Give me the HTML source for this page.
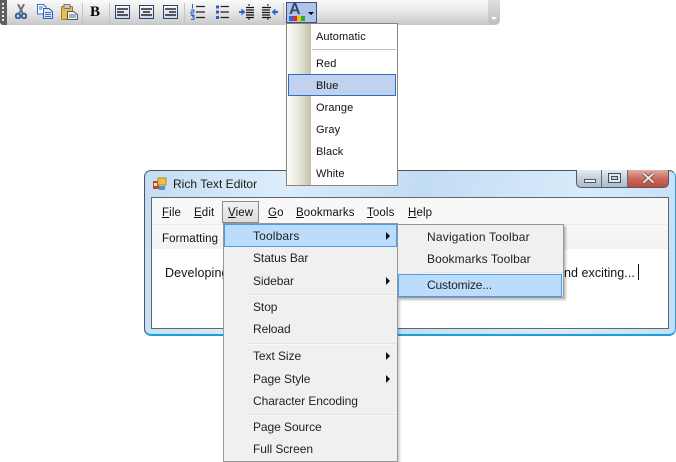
<!DOCTYPE html>
<html><head><meta charset="utf-8"><style>
html,body{margin:0;padding:0;background:#fff}
body{position:relative;width:676px;height:462px;overflow:hidden;font:11.5px/14px "Liberation Sans",sans-serif;color:#111}
div,svg{position:absolute;box-sizing:border-box}
.t{white-space:nowrap;letter-spacing:.12px;margin-top:1px}
.m{color:#222;font-size:12px;letter-spacing:-.07px;margin-top:0}
.c{color:#111;font-size:11px;letter-spacing:.1px;margin-top:1px}
u{text-decoration:underline}
.sep{height:2px;background:#e2e2e2;border-bottom:1px solid #f8f8f8}
.tsep{top:3px;width:1px;height:20px;background:#c4c4bc}
.arr{width:0;height:0;border-left:4px solid #111;border-top:4px solid transparent;border-bottom:4px solid transparent}
</style></head><body>

<div style="left:144px;top:170px;width:532px;height:166px;border:1px solid #4a5560;border-bottom:2px solid #1c9fd6;border-right:1px solid #2aa5d8;border-radius:7px;background:linear-gradient(100deg,#c4dcf2 0,#dcecfa 25%,#c2dcf4 50%,#d9ebfb 80%,#c4def5 100%)"></div>
<div style="left:152px;top:176px;width:16px;height:16px"><svg width="16" height="16"><rect x="1" y="5" width="6" height="8" fill="#b8472a"/><rect x="6" y="2" width="8" height="7" fill="#f0c040" stroke="#b08a30"/><rect x="7" y="10" width="6" height="4" fill="#5a8fd0"/><rect x="2" y="7" width="3" height="3" fill="#f4e0c0"/></svg></div>
<div class="t" style="left:173px;top:176px;font-size:12px;letter-spacing:.02px;color:#1a1a1a">Rich Text Editor</div>
<div style="left:576px;top:170px;width:93px;height:18px;border:1px solid #4e5a66;border-top:0;border-radius:0 0 5px 5px;background:linear-gradient(#e4ecf4,#c4d0dc 50%,#aebbc9);overflow:hidden">
 <div style="left:24px;top:0;width:1px;height:18px;background:#5d6975"></div>
 <div style="left:50px;top:0;width:1px;height:18px;background:#5d6975"></div>
 <div style="left:51px;top:0;width:41px;height:17px;background:linear-gradient(#e2aca0,#cc6a5c 50%,#bc4a3c)"></div>
 <div style="left:7px;top:9px;width:12px;height:4px;background:#eef2f6;border:1px solid #4a5868"></div>
 <div style="left:31px;top:3px;width:13px;height:10px;border:1px solid #3f4c5a;background:#dfe7ef"><div style="left:2px;top:2px;width:7px;height:4px;border:1px solid #3f4c5a;background:#c3ced9"></div></div>
 <svg style="left:64px;top:2px" width="15" height="12"><path d="M2.5 1.5L12.5 10.5M12.5 1.5L2.5 10.5" stroke="#6a4a48" stroke-width="3.6"/><path d="M2.5 1.5L12.5 10.5M12.5 1.5L2.5 10.5" stroke="#e8e4e2" stroke-width="2"/></svg>
</div>

<div style="left:151px;top:197px;width:518px;height:132px;background:#fff;border:1px solid #5f6770"></div>
<div style="left:152px;top:198px;width:516px;height:27px;background:#f8f8f8;border-bottom:1px solid #ececec"></div>
<div style="left:152px;top:225px;width:516px;height:24px;background:linear-gradient(#f8f8f8,#f2f2f2)"></div>
<div class="t" style="left:162px;top:205px"><u>F</u>ile</div>
<div class="t" style="left:194px;top:205px"><u>E</u>dit</div>
<div style="left:222px;top:201px;width:37px;height:22px;border:1px solid #8a8a8a;background:linear-gradient(#f2f2f2,#dcdcdc)"></div>
<div class="t" style="left:228px;top:205px"><u>V</u>iew</div>
<div class="t" style="left:268px;top:205px"><u>G</u>o</div>
<div class="t" style="left:296px;top:205px"><u>B</u>ookmarks</div>
<div class="t" style="left:367px;top:205px"><u>T</u>ools</div>
<div class="t" style="left:408px;top:205px"><u>H</u>elp</div>
<div class="t" style="left:162px;top:231px">Formatting</div>
<div class="t" style="left:165px;top:265px;font-size:12.5px;letter-spacing:.1px;color:#111">Developing</div>
<div class="t" style="left:564px;top:265px;font-size:12.5px;letter-spacing:.05px;color:#111">nd exciting...</div>
<div style="left:638px;top:264px;width:1px;height:16px;background:#111"></div>

<!-- main menu -->
<div style="left:223px;top:223px;width:175px;height:239px;background:#f0f0f0;border:1px solid #979797;box-shadow:2px 2px 2px rgba(0,0,0,.18)"></div>
<div style="left:224px;top:224px;width:173px;height:23px;background:#bcdcfb;border:1px solid #4a9ce8"></div>
<div class="t m" style="left:253px;top:229px;letter-spacing:.15px">Toolbars</div><div class="arr" style="left:386px;top:232px"></div>
<div class="t m" style="left:253px;top:251px">Status Bar</div>
<div class="t m" style="left:253px;top:274px">Sidebar</div><div class="arr" style="left:386px;top:277px"></div>
<div class="sep" style="left:248px;top:294px;width:148px"></div>
<div class="t m" style="left:253px;top:300px">Stop</div>
<div class="t m" style="left:253px;top:322px">Reload</div>
<div class="sep" style="left:248px;top:343px;width:148px"></div>
<div class="t m" style="left:253px;top:349px">Text Size</div><div class="arr" style="left:386px;top:352px"></div>
<div class="t m" style="left:253px;top:372px">Page Style</div><div class="arr" style="left:386px;top:375px"></div>
<div class="t m" style="left:253px;top:394px">Character Encoding</div>
<div class="sep" style="left:248px;top:414px;width:148px"></div>
<div class="t m" style="left:253px;top:420px">Page Source</div>
<div class="t m" style="left:253px;top:442px">Full Screen</div>

<!-- sub menu -->
<div style="left:397px;top:224px;width:167px;height:74px;background:#f0f0f0;border:1px solid #979797;box-shadow:2px 2px 2px rgba(0,0,0,.25)"></div>
<div class="t m" style="left:427px;top:230px;letter-spacing:.2px">Navigation Toolbar</div>
<div class="t m" style="left:427px;top:252px;letter-spacing:.07px">Bookmarks Toolbar</div>
<div class="sep" style="left:422px;top:272px;width:140px"></div>
<div style="left:398px;top:274px;width:164px;height:23px;background:#bcdcfb;border:1px solid #4a9ce8"></div>
<div class="t m" style="left:427px;top:278px;letter-spacing:-.15px">Customize...</div>

<!-- toolbar -->
<div style="left:0;top:0;width:500px;height:25px;border-radius:0 0 5px 3px;background:linear-gradient(#fafafa,#ececec 35%,#c9c9c9)"></div>
<div style="left:0;top:0;width:7px;height:25px;background:#5f5f5f;border-radius:0 0 0 3px"></div>
<svg style="left:2px;top:2px" width="4" height="22"><g fill="#e8e8e8"><rect x="0" y="1" width="2" height="2"/><rect x="0" y="5" width="2" height="2"/><rect x="0" y="9" width="2" height="2"/><rect x="0" y="13" width="2" height="2"/><rect x="0" y="17" width="2" height="2"/></g></svg>
<div style="left:488px;top:0;width:12px;height:25px;background:linear-gradient(#e0e0e0,#bdbdbd);border-radius:0 0 5px 5px"></div>
<div style="left:491px;top:17px;width:0;height:0;border:3px solid transparent;border-top:3px solid #fff;border-bottom:0"></div>

<!-- cut -->
<svg style="left:15px;top:4px" width="12" height="15"><path d="M3 0L7.5 9M9 0L4.5 9" stroke="#6f747c" stroke-width="2" fill="none"/><ellipse cx="3" cy="12" rx="2.2" ry="2.4" fill="none" stroke="#33609f" stroke-width="2"/><ellipse cx="9" cy="12" rx="2.2" ry="2.4" fill="none" stroke="#33609f" stroke-width="2"/></svg>
<!-- copy -->
<svg style="left:37px;top:4px" width="16" height="15"><path d="M.5 .5H6.5L9 3V10H.5Z" fill="#fff" stroke="#3a6fc0"/><path d="M6.5 4.5H12L15.5 7.5V14.5H6.5Z" fill="#dfe9f8" stroke="#2a5bb0"/><path d="M8 8.5H14M8 10.5H14M8 12.5H14M2 3H6M2 5H5" stroke="#3a6dc0"/></svg>
<!-- paste -->
<svg style="left:61px;top:4px" width="17" height="16"><rect x=".5" y="2.5" width="11" height="13" rx="1" fill="#eabf4e" stroke="#a5761f"/><rect x="3" y=".5" width="6" height="4" fill="#c9cbcb" stroke="#777"/><path d="M6.5 7.5H12.5L16.5 10.5V15.5H6.5Z" fill="#f2f4f6" stroke="#4d5a68"/><path d="M8 11H15M8 13H15" stroke="#5a6776"/></svg>
<div class="tsep" style="left:82px"></div>
<div style="left:90px;top:4px;font:bold 15px/16px 'Liberation Serif',serif;color:#000">B</div>
<div class="tsep" style="left:109px"></div>

<svg style="left:115px;top:5px" width="64" height="14"><defs><linearGradient id="g" x1="0" y1="0" x2="0" y2="1"><stop offset="0" stop-color="#fbfcfe"/><stop offset="1" stop-color="#c8d6ea"/></linearGradient></defs><g fill="url(#g)" stroke="#2f4466"><rect x=".5" y=".5" width="14" height="13"/><rect x="24.5" y=".5" width="14" height="13"/><rect x="48.5" y=".5" width="14" height="13"/></g><path d="M2 4H13M2 7H9M2 10H13M26 4H37M28 7H35M26 10H37M50 4H61M54 7H61M50 10H61" stroke="#000" stroke-width="1.2"/></svg>
<div class="tsep" style="left:184px"></div>
<!-- numbered list -->
<svg style="left:190px;top:4px" width="16" height="16"><path d="M2.5 0V4.5M1 6H4V8H1V10H4M1 11.5H4V13H2M4 13V15.5H1" stroke="#2a5fc0" fill="none"/><path d="M6 2.5H15M6 8H15M6 13.5H15" stroke="#222" stroke-width="1.3"/></svg>
<!-- bullets -->
<svg style="left:215px;top:4px" width="15" height="16"><g fill="#2a5fc0"><rect x="1" y="1.5" width="3" height="3"/><rect x="1" y="6.5" width="3" height="3"/><rect x="1" y="12" width="3" height="3"/></g><path d="M5.5 2.5H14M5.5 8H14M5.5 13.5H14" stroke="#222" stroke-width="1.3"/></svg>
<!-- indent -->
<svg style="left:239px;top:4px" width="15" height="16"><path d="M0 8H3" stroke="#2a6ad0" stroke-width="2"/><path d="M2.5 4.5L6.5 8L2.5 11.5Z" fill="#2a6ad0"/><path d="M7 3.5H15M7 6H15M7 8.5H15M7 11H15M7 13.5H15" stroke="#111" stroke-width="1.2"/><path d="M10 0V2M10 14V16" stroke="#111"/></svg>
<!-- outdent -->
<svg style="left:262px;top:4px" width="16" height="16"><path d="M13 8H16" stroke="#2a6ad0" stroke-width="2"/><path d="M13.5 4.5L9.5 8L13.5 11.5Z" fill="#2a6ad0"/><path d="M0 3.5H9M0 6H8M0 8.5H8M0 11H8M0 13.5H9" stroke="#111" stroke-width="1.2"/><path d="M6 0V2M6 14V16" stroke="#111"/></svg>
<div class="tsep" style="left:283px"></div>
<!-- color button -->
<div style="left:286px;top:2px;width:31px;height:21px;background:#b0c4ea;border:1px solid #3f4d80"></div>
<div style="left:289px;top:2px;font:bold 16px/16px 'Liberation Sans',sans-serif;color:#34466f">A</div>
<svg style="left:289px;top:16px" width="16" height="5"><rect x="0" width="4" height="5" fill="#2a6ad0"/><rect x="4" width="4" height="5" fill="#e02a2a"/><rect x="8" width="4" height="5" fill="#f5c000"/><rect x="12" width="4" height="5" fill="#2fa82f"/></svg>
<div style="left:308px;top:12px;width:0;height:0;border:3px solid transparent;border-top:3px solid #000;border-bottom:0"></div>

<!-- color menu -->
<div style="left:286px;top:23px;width:112px;height:163px;background:#fff;border:1px solid #8a867a"></div>
<div style="left:287px;top:24px;width:24px;height:161px;background:linear-gradient(90deg,#fcfcf9,#e6e6da 50%,#c5c2ac)"></div>
<div style="left:312px;top:49px;width:84px;height:1px;background:#c5c2b8"></div>
<div style="left:288px;top:74px;width:108px;height:22px;background:#c1d2ee;border:1px solid #316ac5"></div>
<div class="t c" style="left:316px;top:29px">Automatic</div>
<div class="t c" style="left:316px;top:56px">Red</div>
<div class="t c" style="left:316px;top:78px">Blue</div>
<div class="t c" style="left:316px;top:100px">Orange</div>
<div class="t c" style="left:316px;top:122px">Gray</div>
<div class="t c" style="left:316px;top:144px">Black</div>
<div class="t c" style="left:316px;top:166px">White</div>
</body></html>
